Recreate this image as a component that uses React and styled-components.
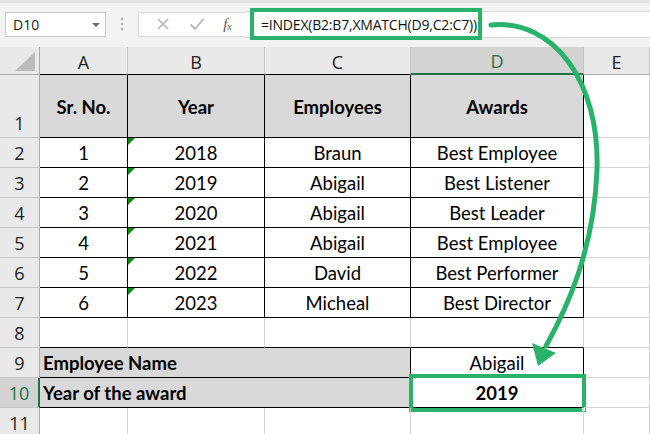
import styled, { createGlobalStyle } from "styled-components";

const GlobalStyle = createGlobalStyle`
  html, body { margin: 0; padding: 0; background: #ffffff; }
  body { font-family: "Lato", "Liberation Sans", sans-serif; overflow: hidden; }
`;

const GREEN = "#2bb26a";
const EXCEL_GREEN = "#217346";
const GRID = "#d4d4d4";
const BLACK = "#000000";

const rows = [
  ["1", "2018", "Braun", "Best Employee"],
  ["2", "2019", "Abigail", "Best Listener"],
  ["3", "2020", "Abigail", "Best Leader"],
  ["4", "2021", "Abigail", "Best Employee"],
  ["5", "2022", "David", "Best Performer"],
  ["6", "2023", "Micheal", "Best Director"],
];

export default function App() {
  return (
    <Page>
      <GlobalStyle />
      <FormulaBar>
        <NameBox>
          D10
          <Caret />
        </NameBox>
        <Dots>
          <span />
          <span />
          <span />
        </Dots>
        <FxButtons>
          <svg width="14" height="14" viewBox="0 0 14 14">
            <path d="M2 2L12 12M12 2L2 12" stroke="#b4b4b4" strokeWidth="1.6" fill="none" />
          </svg>
          <svg width="16" height="14" viewBox="0 0 16 14">
            <path d="M1.5 7.5L6 12L14.5 2" stroke="#b4b4b4" strokeWidth="1.8" fill="none" />
          </svg>
          <Fx>
            f<sub>x</sub>
          </Fx>
        </FxButtons>
        <FormulaInput>
          <FormulaHighlight>=INDEX(B2:B7,XMATCH(D9,C2:C7))</FormulaHighlight>
        </FormulaInput>
      </FormulaBar>

      <Sheet>
        <Corner>
          <svg width="22" height="20" viewBox="0 0 22 20">
            <path d="M21 0V19H1Z" fill="#bcbcbc" />
          </svg>
        </Corner>
        <ColHead $bottom={BLACK}>A</ColHead>
        <ColHead $bottom={BLACK}>B</ColHead>
        <ColHead $bottom={BLACK}>C</ColHead>
        <ColHead $active>D</ColHead>
        <ColHead>E</ColHead>

        <RowHead $tall>1</RowHead>
        <HeadCell>Sr. No.</HeadCell>
        <HeadCell>Year</HeadCell>
        <HeadCell>Employees</HeadCell>
        <HeadCell>Awards</HeadCell>
        <Cell />

        {rows.map((r, i) => (
          <Row key={i} n={i + 2} data={r} />
        ))}

        <RowHead>8</RowHead>
        <Cell $bottom={BLACK} />
        <Cell $bottom={BLACK} />
        <Cell $bottom={BLACK} />
        <Cell $bottom={BLACK} />
        <Cell />

        <RowHead>9</RowHead>
        <LabelCell>Employee Name</LabelCell>
        <Cell $right={BLACK} $bottom={BLACK}>Abigail</Cell>
        <Cell />

        <RowHead $active>10</RowHead>
        <LabelCell>Year of the award</LabelCell>
        <Cell $right={BLACK} $bottom={BLACK} $bold>
          2019
          <Selection>
            <Handle />
          </Selection>
        </Cell>
        <Cell />

        <RowHead>11</RowHead>
        <Cell />
        <Cell />
        <Cell />
        <Cell />
        <Cell />
      </Sheet>

      <Arrow width="650" height="434" viewBox="0 0 650 434">
        <path
          d="M491 25 C554 19 600 82 597 170 C594 250 567 308 546 346"
          stroke={GREEN}
          strokeWidth="5"
          fill="none"
          strokeLinecap="round"
        />
        <path d="M538 366 L532 343 L556 353 Z" fill={GREEN} />
      </Arrow>
    </Page>
  );
}

function Row({ n, data }) {
  return (
    <>
      <RowHead>{n}</RowHead>
      <Cell $right={BLACK} $bottom={BLACK}>{data[0]}</Cell>
      <Cell $right={BLACK} $bottom={BLACK}>
        <Flag />
        {data[1]}
      </Cell>
      <Cell $right={BLACK} $bottom={BLACK}>{data[2]}</Cell>
      <Cell $right={BLACK} $bottom={BLACK}>{data[3]}</Cell>
      <Cell />
    </>
  );
}

const Page = styled.div`
  position: relative;
  width: 650px;
  height: 434px;
  overflow: hidden;
`;

const FormulaBar = styled.div`
  height: 47px;
  box-sizing: border-box;
  background: #f3f3f3;
  border-top: 3px solid #e4e4e4;
  display: flex;
  align-items: center;
  padding: 0 0 2px 5px;
  font-family: "Open Sans", "Liberation Sans", sans-serif;
`;

const NameBox = styled.div`
  position: relative;
  width: 101px;
  height: 25px;
  box-sizing: border-box;
  background: #fff;
  border: 1px solid #c8c8c8;
  font-size: 14px;
  color: #222;
  padding-left: 7px;
  display: flex;
  align-items: center;
`;

const Caret = styled.span`
  position: absolute;
  right: 5px;
  top: 10px;
  border-left: 4px solid transparent;
  border-right: 4px solid transparent;
  border-top: 4px solid #6b6b6b;
`;

const Dots = styled.div`
  width: 32px;
  display: flex;
  flex-direction: column;
  align-items: center;
  gap: 3px;
  span {
    width: 2px;
    height: 2px;
    background: #a8a8a8;
  }
`;

const FxButtons = styled.div`
  width: 107px;
  height: 25px;
  box-sizing: border-box;
  background: #fff;
  border: 1px solid #d6d6d6;
  border-right: none;
  display: flex;
  align-items: center;
  justify-content: space-around;
  padding: 0 4px 0 8px;
`;

const Fx = styled.span`
  font-family: "Liberation Serif", serif;
  font-style: italic;
  font-size: 15px;
  color: #555;
  sub {
    font-size: 10px;
    vertical-align: -1px;
  }
`;

const FormulaInput = styled.div`
  flex: 1;
  height: 25px;
  background: #fff;
  border-top: 1px solid #d6d6d6;
  border-bottom: 1px solid #d6d6d6;
  display: flex;
  align-items: center;
  padding-left: 5px;
`;

const FormulaHighlight = styled.div`
  width: 232px;
  height: 32px;
  box-sizing: border-box;
  border: 4px solid ${GREEN};
  background: #fff;
  font-size: 14px;
  color: #111;
  display: flex;
  align-items: center;
  padding-left: 7px;
  white-space: nowrap;
  letter-spacing: -0.2px;
`;

const Sheet = styled.div`
  display: grid;
  grid-template-columns: 40px 88px 137px 146px 173px 1fr;
  grid-template-rows: 28px 63px repeat(10, 30px);
`;

const Corner = styled.div`
  background: #e9e9e9;
  border-right: 1px solid #ababab;
  border-bottom: 1px solid #ababab;
  display: flex;
  align-items: flex-end;
  justify-content: flex-end;
  padding: 0 3px 2px 0;
`;

const ColHead = styled.div`
  background: ${(p) => (p.$active ? "#d3d3d3" : "#e9e9e9")};
  color: ${(p) => (p.$active ? EXCEL_GREEN : "#222")};
  border-right: 1px solid #c6c6c6;
  border-bottom: ${(p) => (p.$active ? `2px solid ${EXCEL_GREEN}` : `1px solid ${p.$bottom || "#ababab"}`)};
  font-family: "Open Sans", "Liberation Sans", sans-serif;
  font-size: 18px;
  display: flex;
  align-items: center;
  justify-content: center;
  padding-top: 2px;
`;

const RowHead = styled.div`
  background: ${(p) => (p.$active ? "#d3d3d3" : "#e9e9e9")};
  color: ${(p) => (p.$active ? EXCEL_GREEN : "#222")};
  border-right: ${(p) => (p.$active ? `2px solid ${EXCEL_GREEN}` : "1px solid #ababab")};
  border-bottom: 1px solid #c6c6c6;
  font-family: "Open Sans", "Liberation Sans", sans-serif;
  font-size: 18px;
  display: flex;
  align-items: ${(p) => (p.$tall ? "flex-end" : "center")};
  justify-content: center;
  padding-bottom: ${(p) => (p.$tall ? "2px" : "0")};
`;

const Cell = styled.div`
  position: relative;
  box-sizing: border-box;
  border-right: 1px solid ${(p) => p.$right || GRID};
  border-bottom: 1px solid ${(p) => p.$bottom || GRID};
  font-size: 18.5px;
  font-weight: ${(p) => (p.$bold ? 700 : 400)};
  color: #000;
  display: flex;
  align-items: center;
  justify-content: center;
  padding-top: 1px;
`;

const HeadCell = styled(Cell).attrs({ $right: BLACK, $bottom: BLACK })`
  background: #d9d9d9;
  font-weight: 700;
`;

const LabelCell = styled(Cell).attrs({ $right: BLACK, $bottom: BLACK })`
  grid-column: span 3;
  background: #d9d9d9;
  font-weight: 700;
  justify-content: flex-start;
  padding-left: 3px;
`;

const Flag = styled.span`
  position: absolute;
  left: 0;
  top: 0;
  border-top: 7px solid #0b8a12;
  border-right: 7px solid transparent;
`;

const Selection = styled.span`
  position: absolute;
  left: -2px;
  top: -4px;
  right: -3px;
  bottom: -5px;
  border: 4px solid ${GREEN};
`;

const Handle = styled.span`
  position: absolute;
  right: -3px;
  bottom: -3px;
  width: 3px;
  height: 3px;
  background: #fff;
`;

const Arrow = styled.svg`
  position: absolute;
  left: 0;
  top: 0;
  pointer-events: none;
`;
